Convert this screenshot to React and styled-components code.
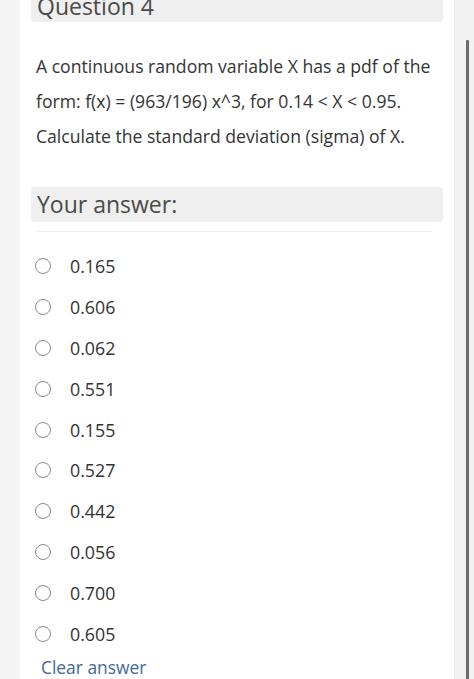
import React from "react"
import styled, { createGlobalStyle } from "styled-components"

const GlobalStyle = createGlobalStyle`
  html, body {
    margin: 0;
    padding: 0;
    background: #f3f3f3;
    font-family: "Open Sans", "Noto Sans", sans-serif;
    overflow: hidden;
  }
`

const Page = styled.div`
  display: flex;
  height: 679px;
  overflow: hidden;
`

const Gutter = styled.div`
  width: 20px;
  flex-shrink: 0;
  background: #f4f4f4;
`

const Card = styled.div`
  width: 435px;
  flex-shrink: 0;
  background: #fff;
  border-right: 1px solid #e9e9e9;
  box-sizing: border-box;
  padding: 0 11px;
`

const Track = styled.div`
  flex: 1;
  background: #f2f2f2;
  display: flex;
  justify-content: flex-end;
  padding-right: 5px;
`

const Thumb = styled.div`
  width: 3px;
  margin-top: 40px;
  height: 700px;
  background: #6b6b6b;
  border-radius: 1px;
`

const SectionBox = styled.div`
  background: #efefef;
  border-radius: 4px;
  height: ${p => p.$h}px;
  margin-top: ${p => p.$top}px;
  display: flex;
  align-items: ${p => p.$align};
  padding-left: 6px;
  font-size: 23px;
  color: #4a4a4a;
  line-height: 1;
`

const BoxTitle = styled.span`
  margin-top: ${p => p.$offset || 0}px;
`

const Prompt = styled.p`
  margin: 27px 0 0;
  padding-left: 5px;
  font-size: 17.6px;
  line-height: 35px;
  color: #333;
`

const Divider = styled.div`
  height: 1px;
  background: #f1f1f1;
  margin: 9px 10px 0 5px;
`

const Options = styled.div`
  margin-top: 14px;
  display: flex;
  flex-direction: column;
`

const Option = styled.label`
  display: flex;
  align-items: center;
  height: 40.8px;
  font-size: 17.8px;
  color: #333;
`

const Radio = styled.span`
  width: 14px;
  height: 14px;
  border: 1.6px solid #8a8a8a;
  border-radius: 50%;
  margin-left: 4px;
  margin-right: 19px;
  flex-shrink: 0;
`

const ClearLink = styled.div`
  padding-left: 10px;
  font-size: 17.4px;
  line-height: 26px;
  color: #3f6a96;
`

const answers = [
  "0.165", "0.606", "0.062", "0.551", "0.155",
  "0.527", "0.442", "0.056", "0.700", "0.605",
]

export default function App() {
  return (
    <>
      <GlobalStyle />
      <Page>
        <Gutter />
        <Card>
          <SectionBox $h={40} $top={-18} $align="flex-start">
            <BoxTitle $offset={13}>Question 4</BoxTitle>
          </SectionBox>
          <Prompt>
            A continuous random variable X has a pdf of the form: f(x) = (963/196) x^3, for 0.14 &lt; X &lt; 0.95. Calculate the standard deviation (sigma) of X.
          </Prompt>
          <SectionBox $h={35} $top={33} $align="center">
            <BoxTitle>Your answer:</BoxTitle>
          </SectionBox>
          <Divider />
          <Options>
            {answers.map(a => (
              <Option key={a}>
                <Radio />
                {a}
              </Option>
            ))}
          </Options>
          <ClearLink>Clear answer</ClearLink>
        </Card>
        <Track>
          <Thumb />
        </Track>
      </Page>
    </>
  )
}
